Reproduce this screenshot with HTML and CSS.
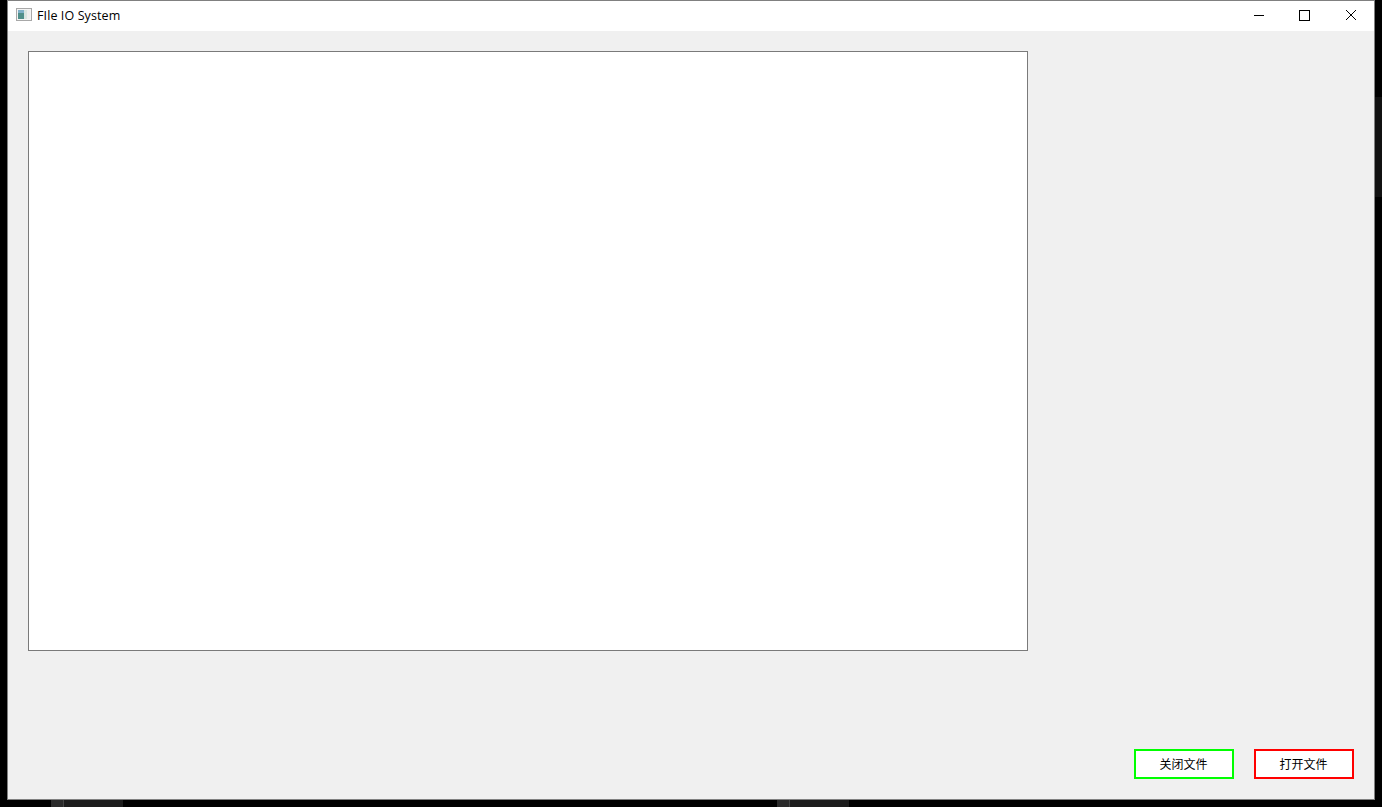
FILE: index.html
```html
<!DOCTYPE html>
<html lang="zh-CN">

<head>
    <meta charset="UTF-8">
    <meta name="viewport" content="width=device-width, initial-scale=1.0">
    <title>File IO System</title>
    <link rel="stylesheet" href="styles.css">
</head>

<body>
    <div class="desktop">
        <div class="window">
            <div class="titlebar">
                <div class="title-left">
                    <svg class="app-icon" width="16" height="16" viewBox="0 0 16 16">
                        <rect x="0.5" y="1.5" width="15" height="12" fill="#f4f4f4" stroke="#a8a8a8" />
                        <rect x="2" y="3" width="6" height="9" fill="#4f8f8a" />
                        <rect x="2" y="3" width="6" height="3" fill="#7fb0c8" />
                        <rect x="8" y="3" width="3" height="9" fill="#d8e4e0" />
                        <rect x="11" y="3" width="3" height="9" fill="#eeeeee" />
                    </svg>
                    <span class="title-text">FIle IO System</span>
                </div>
                <div class="window-controls">
                    <div class="control">
                        <svg width="12" height="12" viewBox="0 0 12 12">
                            <path d="M1 6.5h10" stroke="#000" fill="none" />
                        </svg>
                    </div>
                    <div class="control">
                        <svg width="12" height="12" viewBox="0 0 12 12">
                            <rect x="0.5" y="1.5" width="10" height="10" stroke="#000" fill="none" />
                        </svg>
                    </div>
                    <div class="control">
                        <svg width="12" height="12" viewBox="0 0 12 12">
                            <path d="M1 1l10 10M11 1L1 11" stroke="#000" fill="none" />
                        </svg>
                    </div>
                </div>
            </div>
            <div class="content">
                <div class="text-view"></div>
                <div class="buttons">
                    <button class="btn btn-close">关闭文件</button>
                    <button class="btn btn-open">打开文件</button>
                </div>
            </div>
        </div>
        <div class="side-strip"></div>
    </div>
    <div class="taskbar">
        <div class="task-item"><span class="task-tab"></span></div>
        <div class="task-item"><span class="task-tab"></span></div>
    </div>
</body>

</html>
```
FILE: styles.css
```css
html, body {
    margin: 0;
    height: 100%;
    overflow: hidden;
    background: #000000;
}

.desktop {
    display: flex;
    padding-left: 7px;
}

.window {
    width: 1368px;
    height: 800px;
    box-sizing: border-box;
    border: 1px solid #808080;
    display: flex;
    flex-direction: column;
}

.side-strip {
    width: 7px;
    height: 100px;
    margin-top: 97px;
    background: #111111;
}

.titlebar {
    height: 30px;
    background: #ffffff;
    display: flex;
    justify-content: space-between;
    align-items: center;
    flex-shrink: 0;
}

.title-left {
    display: flex;
    align-items: center;
    padding-left: 8px;
}

.app-icon {
    margin-right: 5px;
    margin-top: -3px;
}

.title-text {
    font-family: "Open Sans", "Noto Sans", sans-serif;
    font-size: 12.5px;
    letter-spacing: 0.1px;
    color: #000000;
    margin-top: -2px;
}

.window-controls {
    display: flex;
}

.control {
    width: 46px;
    height: 30px;
    display: flex;
    justify-content: center;
    align-items: center;
}

.control svg {
    margin-top: -3px;
}

.content {
    flex: 1;
    background: #f0f0f0;
    padding: 20px;
    display: flex;
    flex-direction: column;
    justify-content: space-between;
}

.text-view {
    width: 1000px;
    height: 600px;
    box-sizing: border-box;
    background: #ffffff;
    border: 1px solid #7a7a7a;
}

.buttons {
    display: flex;
    justify-content: flex-end;
    gap: 20px;
}

.btn {
    width: 100px;
    height: 30px;
    padding: 0 1px 2px 0;
    background: #ffffff;
    color: #000000;
    font-family: "Noto Sans CJK SC", sans-serif;
    font-size: 12px;
    border: 2px solid;
    border-radius: 0;
}

.btn-close {
    border-color: #00ff00;
}

.btn-open {
    border-color: #ff0000;
}

.taskbar {
    display: flex;
    gap: 654px;
    padding-left: 51px;
}

.task-item {
    width: 72px;
    height: 7px;
    background: #1c1c1c;
}

.task-tab {
    display: block;
    width: 12px;
    height: 7px;
    background: #2a2a2a;
    border-right: 1px solid #444444;
}
```
